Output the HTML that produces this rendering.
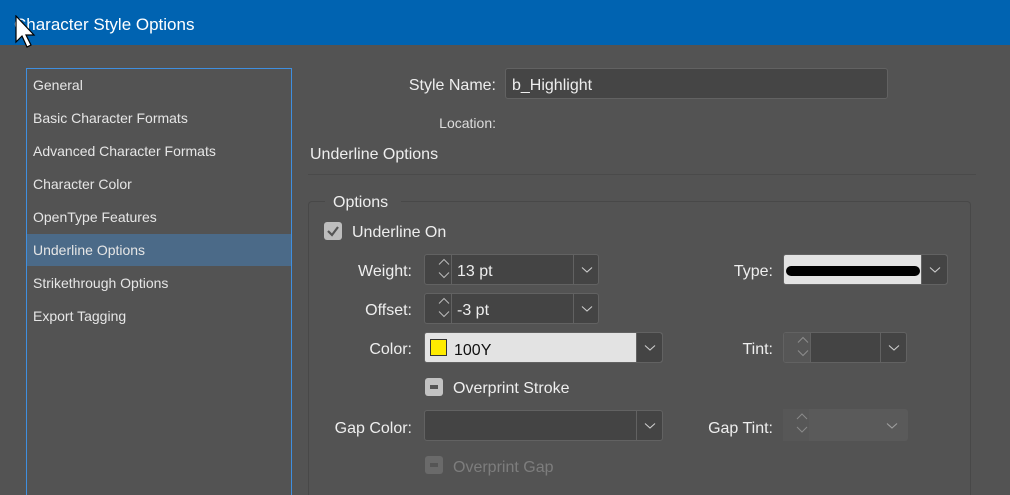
<!DOCTYPE html>
<html style="width:1010px;height:495px;overflow:hidden"><head><style>
*{margin:0;padding:0;box-sizing:border-box}
body{width:1010px;height:495px;overflow:hidden;background:#535353;font-family:"Liberation Sans",sans-serif;color:#eee;position:relative}
.a{position:absolute}
.t{position:absolute;white-space:nowrap;line-height:20px;transform:translateY(-8px)}
.r{text-align:right}
.li{position:absolute;left:33px;font-size:14px;color:#e6e6e6;line-height:20px}
.box{position:absolute;background:#444;border:1px solid #626262;border-radius:3px;overflow:hidden}
.dd{position:absolute;top:0;bottom:0;border-left:1px solid #626262;display:flex;align-items:center;justify-content:center}
.sp{position:absolute;top:0;bottom:0;left:0;border-right:1px solid #626262}
</style></head><body>
<div class="a" style="left:0;top:0;width:1010px;height:45px;background:#0063b1"></div>
<div class="t" style="left:14px;top:23px;font-size:17px;color:#fff">Character Style Options</div>
<svg class="a" style="left:15px;top:15px" width="26" height="36" viewBox="0 0 26 36"><path d="M1 1 L1 27 L7 21 L12 32 L16 30 L11 20 L19 20 Z" fill="#fff" stroke="#000" stroke-width="1.2"/></svg>
<div class="a" style="left:26px;top:68px;width:266px;height:427px;border:1px solid #3f8fe0;border-bottom:none;background:#535353"></div>
<div class="a" style="left:27px;top:234px;width:264px;height:32px;background:#4b6a88"></div>
<div class="li" style="top:75px">General</div>
<div class="li" style="top:108px">Basic Character Formats</div>
<div class="li" style="top:141px">Advanced Character Formats</div>
<div class="li" style="top:174px">Character Color</div>
<div class="li" style="top:207px">OpenType Features</div>
<div class="li" style="top:240px">Underline Options</div>
<div class="li" style="top:273px">Strikethrough Options</div>
<div class="li" style="top:306px">Export Tagging</div>

<div class="t r" style="right:514px;top:84px;font-size:16px">Style Name:</div>
<div class="box" style="left:505px;top:68px;width:383px;height:31px;background:#454545"></div>
<div class="t" style="left:512px;top:84px;font-size:16px">b_Highlight</div>
<div class="t r" style="right:514px;top:121px;font-size:14px;color:#ddd">Location:</div>
<div class="t" style="left:310px;top:153px;font-size:16px">Underline Options</div>
<div class="a" style="left:308px;top:174px;width:668px;height:1px;background:#4a4a4a"></div>

<div class="a" style="left:308px;top:201px;width:663px;height:294px;border:1px solid #484848;border-bottom:none;border-radius:4px 4px 0 0"></div>
<div class="a" style="left:325px;top:192px;width:76px;height:18px;background:#535353"></div>
<div class="t" style="left:333px;top:201px;font-size:16px">Options</div>

<div class="a" style="left:324px;top:222px;width:18px;height:18px;background:#bdbdbd;border-radius:3px"></div>
<svg class="a" style="left:324px;top:222px" width="18" height="18"><path d="M4 9 L8 13 L14 5" stroke="#555" stroke-width="2.2" fill="none"/></svg>
<div class="t" style="left:352px;top:231px;font-size:16px">Underline On</div>

<svg width="0" height="0" style="position:absolute"><defs>
<symbol id="ch" viewBox="0 0 12 8"><path d="M1 1.5 L6 6 L11 1.5" stroke="#ccc" stroke-width="1.1" fill="none"/></symbol>
<symbol id="sp" viewBox="0 0 14 26"><path d="M2 9 L7 4 L12 9 M2 17 L7 22 L12 17" stroke="#bbb" stroke-width="1" fill="none"/></symbol>
</defs></svg>

<div class="t r" style="right:598px;top:270px;font-size:16px">Weight:</div>
<div class="box" style="left:424px;top:254px;width:175px;height:31px">
<div class="sp" style="width:27px"><svg width="26" height="29" viewBox="-6 1 26 26"><use href="#sp"/></svg></div>
<div class="dd" style="left:148px;width:26px"><svg width="12" height="8"><use href="#ch"/></svg></div></div>
<div class="t" style="left:457px;top:270px;font-size:16px">13 pt</div>

<div class="t r" style="right:598px;top:309px;font-size:16px">Offset:</div>
<div class="box" style="left:424px;top:293px;width:175px;height:31px">
<div class="sp" style="width:27px"><svg width="26" height="29" viewBox="-6 1 26 26"><use href="#sp"/></svg></div>
<div class="dd" style="left:148px;width:26px"><svg width="12" height="8"><use href="#ch"/></svg></div></div>
<div class="t" style="left:457px;top:309px;font-size:16px">-3 pt</div>

<div class="t r" style="right:598px;top:348px;font-size:16px">Color:</div>
<div class="box" style="left:424px;top:332px;width:239px;height:31px;background:#e3e3e3">
<div class="dd" style="left:211px;width:27px;background:#444"><svg width="12" height="8"><use href="#ch"/></svg></div></div>
<div class="a" style="left:430px;top:339px;width:17px;height:17px;background:#ffeb00;border:1px solid #333"></div>
<div class="t" style="left:454px;top:349px;font-size:16px;color:#111">100Y</div>

<div class="t r" style="right:237px;top:270px;font-size:16px">Type:</div>
<div class="box" style="left:783px;top:254px;width:165px;height:31px;background:#e3e3e3">
<div class="a" style="left:2px;top:11px;width:134px;height:10px;background:#000;border-radius:5px"></div>
<div class="dd" style="left:137px;width:27px;background:#444"><svg width="12" height="8"><use href="#ch"/></svg></div></div>

<div class="t r" style="right:237px;top:348px;font-size:16px">Tint:</div>
<div class="box" style="left:783px;top:332px;width:124px;height:31px">
<div class="sp" style="width:27px;background:#565656"><svg width="26" height="29" viewBox="-6 1 26 26" opacity=".55"><use href="#sp"/></svg></div>
<div class="dd" style="left:96px;width:27px"><svg width="12" height="8"><use href="#ch"/></svg></div></div>

<div class="a" style="left:425px;top:378px;width:18px;height:18px;background:#c2c2c2;border-radius:3px"></div>
<div class="a" style="left:430px;top:385px;width:8px;height:4px;background:#555"></div>
<div class="t" style="left:453px;top:387px;font-size:16px">Overprint Stroke</div>

<div class="t r" style="right:598px;top:427px;font-size:16px">Gap Color:</div>
<div class="box" style="left:424px;top:410px;width:239px;height:31px">
<div class="dd" style="left:211px;width:27px"><svg width="12" height="8"><use href="#ch"/></svg></div></div>

<div class="t r" style="right:237px;top:427px;font-size:16px">Gap Tint:</div>
<div class="a" style="left:783px;top:409px;width:125px;height:32px;background:#5a5a5a;border-radius:3px">
<div class="a" style="left:0;top:0;width:26px;height:32px;background:#575757"><svg width="26" height="30" viewBox="-6 1 26 26" opacity=".5"><use href="#sp"/></svg></div>
<svg class="a" style="left:103px;top:13px" width="12" height="8" opacity=".6"><use href="#ch"/></svg></div>

<div class="a" style="left:425px;top:456px;width:18px;height:18px;background:#6a6a6a;border-radius:3px"></div>
<div class="a" style="left:430px;top:463px;width:8px;height:4px;background:#555"></div>
<div class="t" style="left:453px;top:466px;font-size:16px;color:#7d7d7d">Overprint Gap</div>
</body></html>
